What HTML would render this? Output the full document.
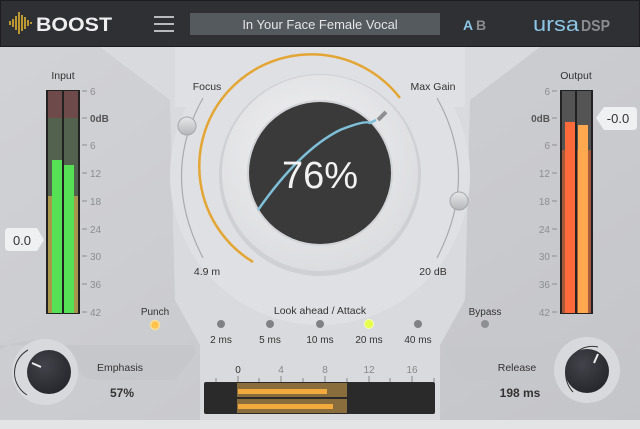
<!DOCTYPE html>
<html><head><style>
body{margin:0;width:640px;height:429px;overflow:hidden;background:#cdced2;font-family:"Liberation Sans",sans-serif}
svg{display:block}
</style></head><body>
<svg width="640" height="429" viewBox="0 0 640 429" xmlns="http://www.w3.org/2000/svg" font-family="Liberation Sans, sans-serif">
<defs>
<radialGradient id="kn" cx="0.4" cy="0.35" r="0.7"><stop offset="0" stop-color="#43444b"/><stop offset="1" stop-color="#25262b"/></radialGradient>
<radialGradient id="ring" cx="0.45" cy="0.4" r="0.7"><stop offset="0" stop-color="#f2f2f4"/><stop offset="1" stop-color="#d8d9dc"/></radialGradient>
<linearGradient id="hd" x1="0" y1="0" x2="0" y2="1"><stop offset="0" stop-color="#e6e7e9"/><stop offset="1" stop-color="#b5b6b9"/></linearGradient>
<linearGradient id="bgl" x1="0" y1="0" x2="1" y2="1"><stop offset="0" stop-color="#d2d3d6"/><stop offset="1" stop-color="#c4c5c9"/></linearGradient>
</defs>
<rect width="640" height="429" fill="url(#bgl)"/>
<!-- center lighter area -->
<polygon points="100,47 540,47 470,100 465,300 440,345 440,420 200,420 200,345 175,300 170,100" fill="#d9dadd"/>
<circle cx="320" cy="175" r="150" fill="#dfe0e3"/>
<rect x="175" y="47" width="290" height="60" fill="#dfe0e3"/>
<!-- bottom side panels -->
<path d="M0,345 L195,345 L195,355 L175,380 L100,380 Q85,380 80,372 Q65,340 35,340 Q10,342 0,350Z" fill="#c6c7cb"/>
<path d="M640,345 L445,345 L445,355 L465,380 L540,380 Q555,380 560,372 Q575,340 605,340 Q630,342 640,350Z" fill="#c6c7cb"/>
<rect x="0" y="420" width="640" height="9" fill="#e3e4e6"/>
<!-- header -->
<rect x="0" y="0" width="640" height="47" fill="#2f3034"/>
<rect x="0.5" y="0.5" width="639" height="46" fill="none" stroke="#1c1c1f"/>
<g stroke="#e0b233" stroke-width="1.6">
<line x1="10" y1="21" x2="10" y2="25"/><line x1="13" y1="19" x2="13" y2="27"/><line x1="16" y1="16" x2="16" y2="30"/><line x1="19" y1="12" x2="19" y2="34"/><line x1="22" y1="15" x2="22" y2="31"/><line x1="25" y1="17" x2="25" y2="29"/><line x1="28" y1="20" x2="28" y2="26"/><line x1="31" y1="22" x2="31" y2="24"/>
</g>
<text x="36" y="31" font-size="19" font-weight="bold" fill="#eeeeee" textLength="76" lengthAdjust="spacingAndGlyphs">BOOST</text>
<g stroke="#b9babd" stroke-width="2"><line x1="154" y1="17" x2="174" y2="17"/><line x1="154" y1="24" x2="174" y2="24"/><line x1="154" y1="31" x2="174" y2="31"/></g>
<rect x="190" y="13" width="250" height="22" fill="#555a5e"/>
<text x="320" y="29" font-size="13" fill="#e4e6e8" text-anchor="middle">In Your Face Female Vocal</text>
<text x="463" y="30" font-size="14" font-weight="bold" fill="#8cc6e6">A</text>
<text x="476" y="30" font-size="14" font-weight="bold" fill="#8a8c90">B</text>
<text x="533" y="31" font-size="20" fill="#8cc6e6" textLength="46" lengthAdjust="spacingAndGlyphs">ursa</text>
<text x="581" y="31" font-size="16" font-weight="bold" fill="#8a8c90" textLength="29" lengthAdjust="spacingAndGlyphs">DSP</text>
<!-- input meter -->
<text x="63" y="79" font-size="10.5" fill="#333" text-anchor="middle">Input</text>
<rect x="46" y="90" width="34" height="224" fill="#222"/>
<g>
<rect x="48" y="91" width="14" height="27" fill="#6e4a4a"/><rect x="64" y="91" width="14" height="27" fill="#6e4a4a"/>
<rect x="48" y="118" width="14" height="78" fill="#52624f"/><rect x="64" y="118" width="14" height="78" fill="#52624f"/>
<rect x="48" y="196" width="14" height="117" fill="#a8964c"/><rect x="64" y="196" width="14" height="117" fill="#a8964c"/>
<rect x="52" y="160" width="10" height="153" fill="#55e055"/><rect x="64" y="165" width="10" height="148" fill="#55e055"/>
</g>
<g font-size="10" fill="#8c8d90" stroke="#8c8d90">
<g stroke-width="1">
<line x1="82" y1="91" x2="87" y2="91"/><line x1="82" y1="118" x2="87" y2="118"/><line x1="82" y1="145" x2="87" y2="145"/><line x1="82" y1="173" x2="87" y2="173"/><line x1="82" y1="201" x2="87" y2="201"/><line x1="82" y1="229" x2="87" y2="229"/><line x1="82" y1="256" x2="87" y2="256"/><line x1="82" y1="284" x2="87" y2="284"/><line x1="82" y1="312" x2="87" y2="312"/>
</g>
<g stroke="none"><text x="90" y="95">6</text><text x="90" y="122" fill="#555" font-weight="bold">0dB</text><text x="90" y="149">6</text><text x="90" y="177">12</text><text x="90" y="205">18</text><text x="90" y="233">24</text><text x="90" y="260">30</text><text x="90" y="288">36</text><text x="90" y="316">42</text></g>
</g>
<path d="M5,232 Q5,228 9,228 L37,228 L44,240 L37,251 L9,251 Q5,251 5,247Z" fill="#eef0f2"/>
<text x="22" y="245" font-size="13" fill="#333" text-anchor="middle">0.0</text>
<!-- output meter -->
<text x="576" y="79" font-size="10.5" fill="#333" text-anchor="middle">Output</text>
<rect x="560" y="90" width="33" height="224" fill="#222"/>
<rect x="562" y="91" width="13" height="59" fill="#545454"/><rect x="577" y="91" width="14" height="59" fill="#545454"/>
<rect x="562" y="150" width="13" height="163" fill="#a85b3c"/><rect x="577" y="150" width="14" height="163" fill="#a85b3c"/>
<rect x="565" y="122" width="10" height="191" fill="#ff6a3a"/><rect x="578" y="125" width="10" height="188" fill="#ffa84f"/>
<g font-size="10" fill="#8c8d90" text-anchor="end">
<g stroke="#8c8d90"><line x1="552" y1="91" x2="557" y2="91"/><line x1="552" y1="118" x2="557" y2="118"/><line x1="552" y1="145" x2="557" y2="145"/><line x1="552" y1="173" x2="557" y2="173"/><line x1="552" y1="201" x2="557" y2="201"/><line x1="552" y1="229" x2="557" y2="229"/><line x1="552" y1="256" x2="557" y2="256"/><line x1="552" y1="284" x2="557" y2="284"/><line x1="552" y1="312" x2="557" y2="312"/></g>
<text x="550" y="95">6</text><text x="550" y="122" fill="#555" font-weight="bold">0dB</text><text x="550" y="149">6</text><text x="550" y="177">12</text><text x="550" y="205">18</text><text x="550" y="233">24</text><text x="550" y="260">30</text><text x="550" y="288">36</text><text x="550" y="316">42</text>
</g>
<path d="M637,111 Q637,107 633,107 L604,107 L596,118 L604,130 L633,130 Q637,130 637,126Z" fill="#eef0f2"/>
<text x="618" y="123" font-size="13" fill="#333" text-anchor="middle">-0.0</text>
<!-- focus / max gain arcs -->
<path d="M203,98 Q160,175 203,258" fill="none" stroke="#a9aaad" stroke-width="1.2"/>
<path d="M437,98 Q480,175 437,258" fill="none" stroke="#a9aaad" stroke-width="1.2"/>
<circle cx="187" cy="126" r="9" fill="url(#hd)" stroke="#a6a7aa"/>
<circle cx="459" cy="201" r="9" fill="url(#hd)" stroke="#a6a7aa"/>
<text x="207" y="90" font-size="10.5" fill="#333" text-anchor="middle">Focus</text>
<text x="433" y="90" font-size="10.5" fill="#333" text-anchor="middle">Max Gain</text>
<text x="207" y="275" font-size="10.5" fill="#333" text-anchor="middle">4.9 m</text>
<text x="433" y="275" font-size="10.5" fill="#333" text-anchor="middle">20 dB</text>
<!-- big knob -->
<path d="M253,262 A112,112 0 1 1 400,98" fill="none" stroke="#e3a534" stroke-width="2.5"/>
<circle cx="320" cy="175" r="101" fill="#c4c5c8" opacity="0.6"/>
<circle cx="320" cy="173" r="98" fill="url(#ring)"/>
<circle cx="320" cy="173" r="73" fill="#d2d3d6"/>
<circle cx="320" cy="173" r="71" fill="#3a3a3b"/>
<path d="M258,210 Q300,150 340,130 Q365,120 370,123 L376,120" fill="none" stroke="#7fc0d8" stroke-width="2.5"/>
<line x1="378" y1="120" x2="386" y2="112" stroke="#8d8e91" stroke-width="4"/>
<text x="320" y="188" font-size="38" fill="#f2f2f2" text-anchor="middle">76%</text>
<!-- LEDs -->
<text x="155" y="315" font-size="10" fill="#333" text-anchor="middle">Punch</text>
<circle cx="155" cy="325" r="4.5" fill="#ffc24a" stroke="#f5dfa0" stroke-width="1.5"/>
<text x="485" y="315" font-size="10" fill="#333" text-anchor="middle">Bypass</text>
<circle cx="485" cy="324" r="4" fill="#8e8f93"/>
<text x="320" y="314" font-size="10.5" fill="#333" text-anchor="middle">Look ahead / Attack</text>
<g fill="#808185"><circle cx="221" cy="324" r="4"/><circle cx="270" cy="324" r="4"/><circle cx="320" cy="324" r="4"/><circle cx="418" cy="324" r="4"/></g>
<circle cx="369" cy="324" r="4.5" fill="#e6ff4a" stroke="#f4ffb0" stroke-width="1"/>
<g font-size="10" fill="#333" text-anchor="middle"><text x="221" y="343">2 ms</text><text x="270" y="343">5 ms</text><text x="320" y="343">10 ms</text><text x="369" y="343">20 ms</text><text x="418" y="343">40 ms</text></g>
<!-- bottom meter -->
<g font-size="10" fill="#888" text-anchor="middle"><text x="238" y="373" fill="#333">0</text><text x="281" y="373">4</text><text x="325" y="373">8</text><text x="369" y="373">12</text><text x="412" y="373">16</text></g>
<g stroke="#888"><line x1="216" y1="378" x2="216" y2="382"/><line x1="238" y1="376" x2="238" y2="382"/><line x1="259" y1="378" x2="259" y2="382"/><line x1="281" y1="376" x2="281" y2="382"/><line x1="303" y1="378" x2="303" y2="382"/><line x1="325" y1="376" x2="325" y2="382"/><line x1="347" y1="378" x2="347" y2="382"/><line x1="369" y1="376" x2="369" y2="382"/><line x1="390" y1="378" x2="390" y2="382"/><line x1="412" y1="376" x2="412" y2="382"/><line x1="434" y1="378" x2="434" y2="382"/></g>
<rect x="204" y="382" width="231" height="32" rx="2" fill="#2a2a2a"/>
<rect x="237" y="383" width="110" height="14" fill="#8a6d3c"/>
<rect x="237" y="399" width="110" height="14" fill="#8a6d3c"/>
<rect x="238" y="389" width="89" height="5" fill="#f2a93e"/>
<rect x="238" y="404" width="95" height="5" fill="#f2a93e"/>
<!-- emphasis knob -->
<circle cx="45" cy="372" r="33" fill="#d8d9dc"/>
<path d="M27,395 A26,26 0 0 1 28,350" fill="none" stroke="#333" stroke-width="1"/>
<circle cx="49" cy="372" r="22" fill="url(#kn)"/>
<line x1="32" y1="363" x2="41" y2="367" stroke="#eee" stroke-width="2"/>
<text x="120" y="371" font-size="10.5" fill="#333" text-anchor="middle">Emphasis</text>
<text x="122" y="397" font-size="12" fill="#333" text-anchor="middle" font-weight="bold">57%</text>
<!-- release knob -->
<circle cx="587" cy="370" r="33" fill="#d8d9dc"/>
<path d="M573,392 A27,27 0 0 1 598,347" fill="none" stroke="#333" stroke-width="1"/>
<circle cx="587" cy="371" r="22" fill="url(#kn)"/>
<line x1="594" y1="363" x2="598" y2="354" stroke="#eee" stroke-width="2"/>
<text x="517" y="371" font-size="10.5" fill="#333" text-anchor="middle">Release</text>
<text x="520" y="397" font-size="12" fill="#333" text-anchor="middle" font-weight="bold">198 ms</text>
</svg>
</body></html>
